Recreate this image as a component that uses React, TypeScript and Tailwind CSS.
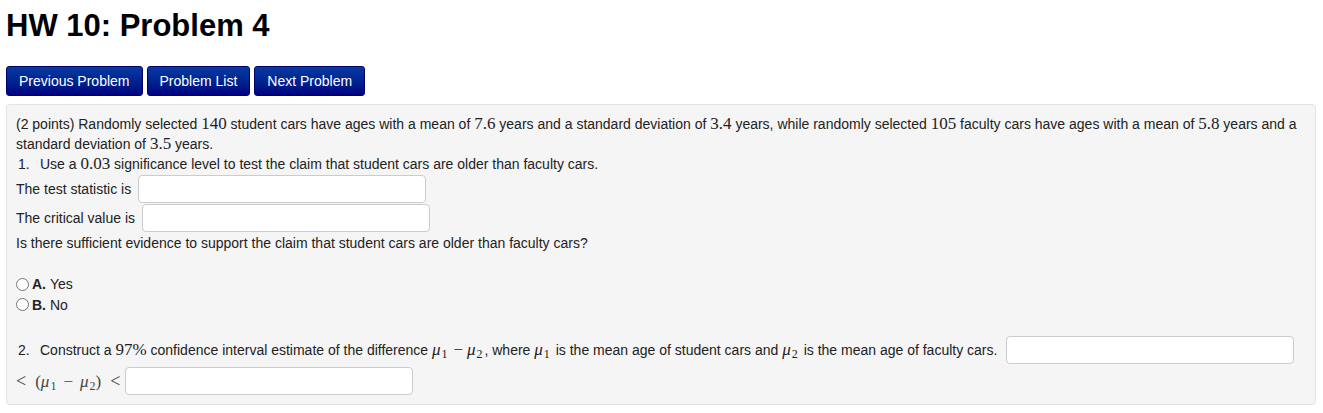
import React from "react";

const serif = { fontFamily: '"Liberation Serif", "DejaVu Serif", serif' };

const M = ({ children }: { children: React.ReactNode }) => (
  <span className="text-[17px] leading-none" style={serif}>{children}</span>
);

const Mu = ({ n }: { n: string }) => (
  <span className="text-[17px] leading-none" style={serif}>
    <i>μ</i>
    <sub className="text-[12px] leading-none ml-[1px] mr-[2px]">{n}</sub>
  </span>
);

const Input = () => (
  <span className="inline-block h-[28px] w-[288px] bg-white border border-[#cccccc] rounded-[4px] align-middle" />
);

const Radio = () => (
  <span className="inline-block w-[13px] h-[13px] rounded-full border border-[#767676] bg-white mr-[3px]" />
);

export default function App() {
  return (
    <div
      className="bg-white text-[#222] w-[1323px] h-[413px] overflow-hidden"
      style={{ fontFamily: '"Liberation Sans", Arial, sans-serif' }}
    >
      <h1 className="text-[31px] font-bold text-black leading-[34px] pt-[9px] pl-[6px]">HW 10: Problem 4</h1>
      <div className="flex gap-[4px] pl-[6px] mt-[23px]">
        {["Previous Problem", "Problem List", "Next Problem"].map((t) => (
          <button
            key={t}
            className="h-[30px] px-[12px] text-[14px] text-white rounded-[3px] border border-[#00006a] bg-gradient-to-b from-[#0a3aa0] to-[#000080]"
          >
            {t}
          </button>
        ))}
      </div>
      <div className="mx-[6px] mt-[8px] w-[1310px] h-[301px] bg-[#f5f5f5] border border-[#e3e3e3] rounded-[4px] px-[9px] pt-[9px] text-[14px] leading-[20px]">
        <div>
          (2 points) Randomly selected <M>140</M> student cars have ages with a mean of <M>7.6</M> years and a standard deviation of <M>3.4</M> years, while randomly selected <M>105</M> faculty cars have ages with a mean of <M>5.8</M> years and a standard deviation of <M>3.5</M> years.
        </div>
        <div className="flex">
          <span className="w-[24px] pl-[2px]">1.</span>
          <span>
            Use a <M>0.03</M> significance level to test the claim that student cars are older than faculty cars.
          </span>
        </div>
        <div className="h-[29px] flex items-center">
          <span>The test statistic is</span>
          <span className="ml-[7px] flex"><Input /></span>
        </div>
        <div className="h-[29px] flex items-center">
          <span>The critical value is</span>
          <span className="ml-[7px] flex"><Input /></span>
        </div>
        <div className="h-[22px] flex items-center">Is there sufficient evidence to support the claim that student cars are older than faculty cars?</div>
        <div className="h-[20px]" />
        <div className="h-[20px] flex items-center"><Radio /><b>A.</b>&nbsp;Yes</div>
        <div className="h-[21px] flex items-center"><Radio /><b>B.</b>&nbsp;No</div>
        <div className="h-[20px]" />
        <div className="h-[30px] flex items-center">
          <span className="w-[24px] pl-[2px]">2.</span>
          <span>
            Construct a <M>97%</M> confidence interval estimate of the difference <Mu n="1" /> <M>−</M> <Mu n="2" />, where <Mu n="1" /> is the mean age of student cars and <Mu n="2" /> is the mean age of faculty cars.
          </span>
          <span className="ml-[9px] flex"><Input /></span>
        </div>
        <div className="h-[31px] flex items-center">
          <span className="text-[17px] text-[#444] leading-none flex items-baseline" style={serif}>
            <span className="text-[18px]">&lt;</span>
            <span className="ml-[9px]">(</span>
            <i>μ</i><sub className="text-[12px] leading-none ml-[1px]">1</sub>
            <span className="mx-[7px]">−</span>
            <i>μ</i><sub className="text-[12px] leading-none ml-[1px]">2</sub>
            <span>)</span>
            <span className="ml-[9px] text-[18px]">&lt;</span>
          </span>
          <span className="ml-[5px] flex"><Input /></span>
        </div>
      </div>
    </div>
  );
}
